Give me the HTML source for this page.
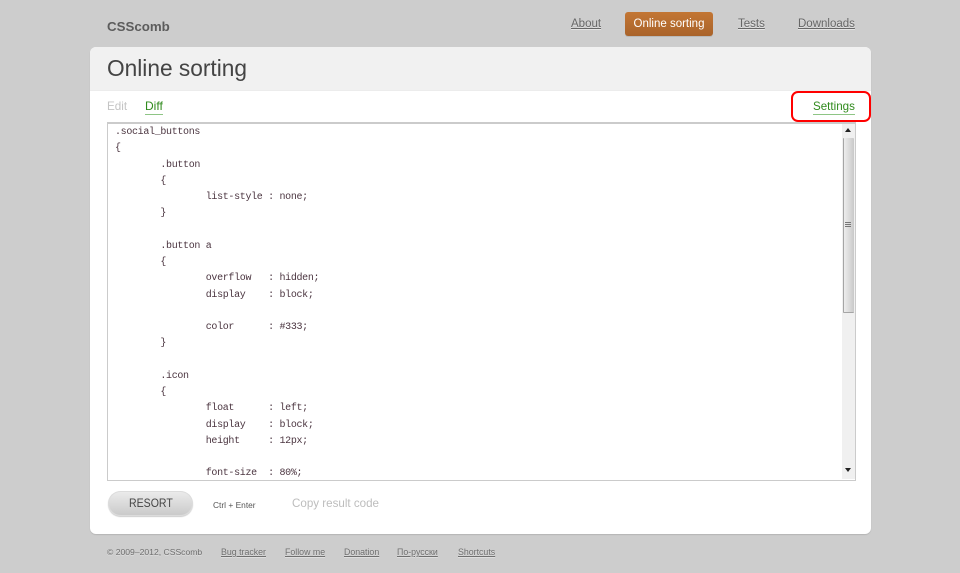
<!DOCTYPE html>
<html lang="en">
<head>
<meta charset="utf-8">
<title>CSScomb</title>
<style>
html,body{margin:0;padding:0}
body{width:960px;height:573px;overflow:hidden;background:#cdcdcd;position:relative;font-family:"Liberation Sans",Arial,sans-serif}
.abs{position:absolute;white-space:nowrap}
a{color:inherit}
.logo{left:107px;top:18px;font-size:13.3px;line-height:17px;font-weight:bold;color:#5c5c5c}
.nav{top:16px;font-size:11.5px;line-height:16px;color:#666;text-decoration:underline;text-shadow:0 1px 0 #e4e4e4}
.active{left:625px;top:12px;width:88px;height:24px;line-height:24px;text-align:center;font-size:11.5px;color:#fff;border-radius:3px;background:linear-gradient(#c37634,#a9632a);box-shadow:0 1px 0 #b9b9b9}
.card{left:90px;top:47px;width:781px;height:487px;background:#fff;border-radius:6px;box-shadow:0 1px 1px #b5b5b5}
.head{left:90px;top:47px;width:781px;height:43px;background:#f1f1f1;border-radius:6px 6px 0 0;border-bottom:1px solid #ececec}
h1{margin:0;left:107px;top:54px;font-size:22.7px;line-height:29px;font-weight:normal;color:#444}
.tab{top:99px;font-size:11.7px;line-height:15px}
.diff{left:145px;font-size:12px;color:#2f8a1c;border-bottom:1px solid #8ec585}
.settings{left:813px;font-size:11.6px;color:#2f8a1c;border-bottom:1px solid #8ec585}
.redbox{left:791px;top:91px;width:76px;height:27px;border:2px solid #f00;border-radius:7px}
.editor{left:107px;top:122px;width:747px;height:356px;border:1px solid #cbcbcb;border-top:2px solid #cbcbcb;background:#fff}
pre.abs{white-space:pre;margin:0;left:115px;top:125px;font-family:"Liberation Mono","DejaVu Sans Mono",monospace;font-size:10px;letter-spacing:-.33px;line-height:16.25px;color:#4b3540}
.sb{left:842px;top:124px;width:13px;height:355px;background:#f0f0f0}
.thumb{left:843px;top:138px;width:11px;height:175px;background:linear-gradient(90deg,#ededed,#d8d8d8 60%,#c8c8c8);border:0 solid #a5a5a5;border-left-width:1px;border-bottom-width:1px;box-sizing:border-box;border-radius:1px}
.grip{left:845px;top:222px;width:6px;height:1px;background:#777;box-shadow:0 2px 0 #777,0 4px 0 #777}
.up{left:845px;top:128px;width:0;height:0;border-left:3.5px solid transparent;border-right:3.5px solid transparent;border-bottom:4px solid #222}
.down{left:845px;top:468px;width:0;height:0;border-left:3.5px solid transparent;border-right:3.5px solid transparent;border-top:4px solid #222}
.btn{left:108px;top:491px;width:85px;height:25px;line-height:24px;text-align:center;font-size:12px;color:#444;border-radius:12.5px;background:linear-gradient(#ececec,#c9c9c9);box-shadow:0 0 0 1px #dcdcdc inset,0 1px 1px #ccc}
.btn span{display:inline-block;transform:scaleX(.88)}
.hint{left:213px;top:499px;font-size:8.4px;line-height:12px;color:#555}
.copy{left:292px;top:496px;font-size:11.6px;line-height:15px;color:#bdbdbd}
.ft{top:546px;font-size:8.8px;line-height:12px;color:#6f6f6f;text-shadow:0 1px 0 #dedede}
</style>
</head>
<body>
<div class="abs logo">CSScomb</div>
<a class="abs nav" style="left:571px" href="#">About</a>
<div class="abs active">Online sorting</div>
<a class="abs nav" style="left:738px" href="#">Tests</a>
<a class="abs nav" style="left:798px" href="#">Downloads</a>

<div class="abs card"></div>
<div class="abs head"></div>
<h1 class="abs">Online sorting</h1>
<div class="abs tab" style="left:107px;color:#c4c4c4">Edit</div>
<div class="abs tab diff">Diff</div>
<div class="abs tab settings">Settings</div>
<div class="abs redbox"></div>

<div class="abs editor"></div>
<pre class="abs">.social_buttons
{
	.button
	{
		list-style : none;
	}

	.button a
	{
		overflow   : hidden;
		display    : block;

		color      : #333;
	}

	.icon
	{
		float      : left;
		display    : block;
		height     : 12px;

		font-size  : 80%;</pre>
<div class="abs sb"></div>
<div class="abs up"></div>
<div class="abs thumb"></div>
<div class="abs grip"></div>
<div class="abs down"></div>

<div class="abs btn"><span>RESORT</span></div>
<div class="abs hint">Ctrl + Enter</div>
<div class="abs copy">Copy result code</div>

<div class="abs ft" style="left:107px;font-size:8.6px">© 2009–2012, CSScomb</div>
<a class="abs ft" style="left:221px" href="#">Bug tracker</a>
<a class="abs ft" style="left:285px" href="#">Follow me</a>
<a class="abs ft" style="left:344px" href="#">Donation</a>
<a class="abs ft" style="left:397px" href="#">По-русски</a>
<a class="abs ft" style="left:458px" href="#">Shortcuts</a>
</body>
</html>
